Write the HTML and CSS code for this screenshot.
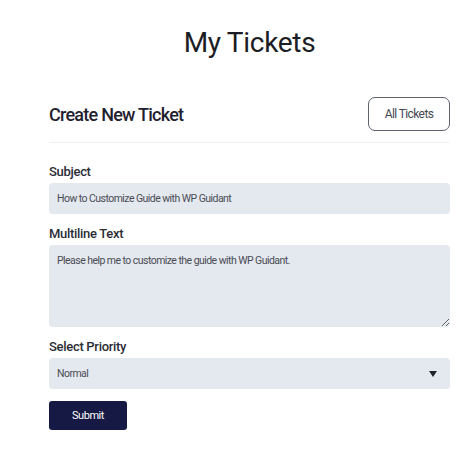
FILE: index.html
```html
<!DOCTYPE html>
<html lang="en">
<head>
<meta charset="utf-8">
<title>My Tickets</title>
<link rel="stylesheet" href="styles.css">
</head>
<body>
<main class="page">
  <h1 class="page-title">My Tickets</h1>
  <section class="card">
    <header class="card-head">
      <h2 class="card-title">Create New Ticket</h2>
      <button class="btn-outline" type="button">All Tickets</button>
    </header>
    <form class="form">
      <div class="field">
        <label class="label" for="subject">Subject</label>
        <input class="control" id="subject" type="text" value="How to Customize Guide with WP Guidant">
      </div>
      <div class="field">
        <label class="label" for="msg">Multiline Text</label>
        <textarea class="control area" id="msg">Please help me to customize the guide with WP Guidant.</textarea>
      </div>
      <div class="field">
        <label class="label" for="prio">Select Priority</label>
        <div class="select-wrap">
          <select class="control select" id="prio">
            <option>Normal</option>
            <option>High</option>
            <option>Low</option>
          </select>
          <span class="caret"></span>
        </div>
      </div>
      <div class="actions">
        <button class="btn-primary" type="button">Submit</button>
      </div>
    </form>
  </section>
</main>
</body>
</html>
```
FILE: styles.css
```css
* { box-sizing: border-box; }
html, body { margin: 0; padding: 0; background: #fff; }
body {
  font-family: Roboto, Inter, "Liberation Sans", sans-serif;
  color: #1f2130;
}
.page {
  width: 401px;
  margin-left: 49px;
  padding-top: 26px;
}
.page-title {
  margin: 0;
  text-align: center;
  font-size: 28px;
  line-height: 34px;
  font-weight: 400;
  letter-spacing: -0.3px;
  color: #1c1d24;
}
.card { margin-top: 37px; }
.card-head {
  display: flex;
  align-items: center;
  justify-content: space-between;
  padding-bottom: 11px;
  border-bottom: 1px solid #f0f1f3;
}
.card-title {
  margin: 0;
  font-size: 18px;
  font-weight: 500;
  letter-spacing: -0.75px;
  color: #1f2130;
}
.btn-outline {
  width: 82px;
  height: 34px;
  border: 1px solid #5d6170;
  border-radius: 7px;
  background: #fff;
  font-family: inherit;
  font-size: 12px;
  color: #444754;
  letter-spacing: -0.6px;
  padding: 0;
}
.form {
  display: flex;
  flex-direction: column;
  gap: 12px;
  padding-top: 21px;
}
.field { display: flex; flex-direction: column; }
.label {
  font-size: 13px;
  line-height: 16px;
  font-weight: 500;
  color: #2b2d36;
  margin-bottom: 3px;
  letter-spacing: -0.3px;
}
.control {
  width: 100%;
  height: 31px;
  border: none;
  border-radius: 4px;
  background: #e4e8ef;
  font-family: inherit;
  font-size: 10.5px;
  color: #4a4c55;
  padding: 0 8px;
  letter-spacing: -0.55px;
  outline: none;
}
.area {
  height: 82px;
  padding: 9px 8px;
  resize: both;
  line-height: 14px;
}
.select-wrap { position: relative; }
.select {
  appearance: none;
  -webkit-appearance: none;
  display: block;
}
.caret {
  position: absolute;
  right: 13px;
  top: 13px;
  width: 0;
  height: 0;
  border-left: 4px solid transparent;
  border-right: 4px solid transparent;
  border-top: 6px solid #22242c;
  pointer-events: none;
}
.btn-primary {
  width: 78px;
  height: 29px;
  border: none;
  border-radius: 3px;
  background: #161943;
  color: #fff;
  font-family: inherit;
  font-size: 11px;
  letter-spacing: -0.45px;
  padding: 0;
}
```
